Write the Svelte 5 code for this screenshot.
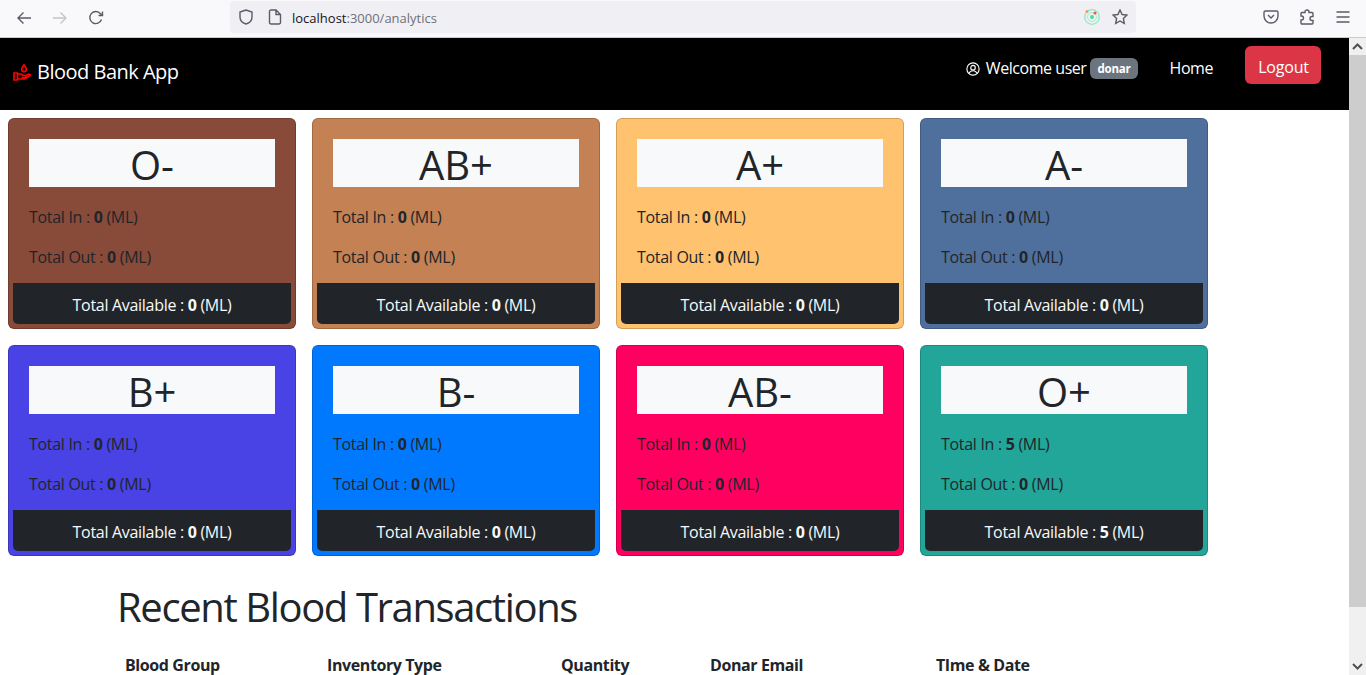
<script>
  const groups = [
    { name: 'O-', color: '#884a39', totalIn: 0, totalOut: 0 },
    { name: 'AB+', color: '#c38154', totalIn: 0, totalOut: 0 },
    { name: 'A+', color: '#ffc26f', totalIn: 0, totalOut: 0 },
    { name: 'A-', color: '#4f709c', totalIn: 0, totalOut: 0 },
    { name: 'B+', color: '#4942e4', totalIn: 0, totalOut: 0 },
    { name: 'B-', color: '#0079ff', totalIn: 0, totalOut: 0 },
    { name: 'AB-', color: '#ff0060', totalIn: 0, totalOut: 0 },
    { name: 'O+', color: '#22a699', totalIn: 5, totalOut: 0 }
  ];
  const columns = ['Blood Group', 'Inventory Type', 'Quantity', 'Donar Email', 'TIme & Date'];
</script>

<div class="window">
  <div class="toolbar">
    <div class="nav-buttons">
      <svg width="16" height="16" viewBox="0 0 16 16" class="ico"><path d="M15 8H2M7.5 2.5 2 8l5.5 5.5" /></svg>
      <svg width="16" height="16" viewBox="0 0 16 16" class="ico faded"><path d="M1 8h13M8.500 2.500 14 8l-5.500 5.500" /></svg>
      <svg width="16" height="16" viewBox="0 0 16 16" class="ico"><path d="M13.500 9.500A6 6 0 1 1 12.500 3.800L14.500 5.500M14.500 1.500v4h-4" /></svg>
    </div>
    <div class="urlbar">
      <svg width="16" height="16" viewBox="0 0 16 16" class="ico shield"><path d="M8 1 2 3v5c0 3.500 2.500 6 6 7 3.500-1 6-3.500 6-7V3z" /></svg>
      <svg width="14" height="16" viewBox="0 0 14 16" class="ico doc"><path d="M1.500 2.500A1.500 1.500 0 0 1 3 1h5l4.500 4.500v8A1.500 1.500 0 0 1 11 15H3a1.500 1.500 0 0 1-1.500-1.500zM8 1v4.500h4.500" /></svg>
      <span class="url">localhost<span class="url-rest">:3000/analytics</span></span>
      <svg width="18" height="18" viewBox="0 0 18 18" class="ext">
        <circle cx="9" cy="9" r="7.300" fill="none" stroke="#8fe8c0" stroke-width="1.300" />
        <circle cx="9" cy="9" r="4.500" fill="none" stroke="#a4eccb" stroke-width="1" />
        <circle cx="9" cy="9" r="2" fill="#4fdc98" />
        <circle cx="4" cy="3.500" r="1.500" fill="#f59a52" />
        <circle cx="12" cy="5" r="1.500" fill="#ef5a3c" />
      </svg>
      <svg width="16" height="16" viewBox="0 0 16 16" class="ico"><path d="m8 1 2.100 4.500 4.900.6-3.600 3.400.9 4.900L8 12l-4.300 2.400.9-4.900L1 6.100l4.900-.6z" /></svg>
    </div>
    <div class="tool-buttons">
      <svg width="16" height="16" viewBox="0 0 16 16" class="ico"><path d="M2.500 2h11A1.500 1.500 0 0 1 15 3.500V7a7 7 0 0 1-14 0V3.500A1.500 1.500 0 0 1 2.500 2zM5 6l3 3 3-3" /></svg>
      <svg width="16" height="16" viewBox="0 0 16 16" class="ico"><path d="M6 3.500V3a2 2 0 0 1 4 0v.500h3a1 1 0 0 1 1 1v3h-1a2 2 0 0 0 0 4h1V14a1 1 0 0 1-1 1H3a1 1 0 0 1-1-1v-3h.5a2 2 0 0 0 0-4H2V4.500a1 1 0 0 1 1-1z" /></svg>
      <svg width="16" height="16" viewBox="0 0 16 16" class="ico"><path d="M1.500 3h13M1.500 8h13M1.500 13h13" /></svg>
    </div>
  </div>

  <div class="viewport">
    <div class="page">
      <nav class="navbar">
        <div class="brand">
          <svg width="18" height="17" viewBox="0 0 18 17" class="brand-icon"><path d="M1 9h3.500v7H1zM4.500 10h3.700l1.800 1.500h2.200c1.200 0 1.200 2 0 2H8.500M4.500 15h7l5.500-3.300c.6-1.200-.7-2-1.700-1.500l-2.300 1.200M11 1c1.200 1.800 2.400 2.900 2.400 4.200a2.400 2.400 0 0 1-4.800 0C8.600 3.900 9.800 2.800 11 1z" /></svg>
          <span>Blood Bank App</span>
        </div>
        <div class="nav-links">
          <div class="welcome">
            <svg width="14" height="14" viewBox="0 0 16 16" class="user-icon"><circle cx="8" cy="8" r="7" /><circle cx="8" cy="6.500" r="2.600" /><path d="M3.500 13c.8-2 2.500-3 4.500-3s3.700 1 4.500 3" /></svg>
            <span class="welcome-text">Welcome user</span>
            <span class="badge">donar</span>
          </div>
          <a class="home" href="#home">Home</a>
          <button class="logout">Logout</button>
        </div>
      </nav>

      <div class="cards">
        {#each groups as g}
          <div class="card" style="background-color: {g.color}">
            <div class="card-body">
              <h1 class="card-title">{g.name}</h1>
              <p>Total In : <b>{g.totalIn}</b> (ML)</p>
              <p>Total Out : <b>{g.totalOut}</b> (ML)</p>
            </div>
            <div class="card-footer">Total Available : <b>{g.totalIn - g.totalOut}</b> (ML)</div>
          </div>
        {/each}
      </div>

      <div class="recent">
        <h1>Recent Blood Transactions</h1>
        <table>
          <thead>
            <tr>
              {#each columns as c}
                <th>{c}</th>
              {/each}
            </tr>
          </thead>
        </table>
      </div>
    </div>

    <div class="scrollbar">
      <div class="arrow">
        <svg width="11" height="7" viewBox="0 0 11 7"><path d="M1 6l4.500-4.500L10 6" /></svg>
      </div>
      <div class="thumb"></div>
      <div class="arrow down">
        <svg width="11" height="7" viewBox="0 0 11 7"><path d="M1 1l4.500 4.500L10 1" /></svg>
      </div>
    </div>
  </div>
</div>

<style>
  :global(body) {
    margin: 0;
    overflow: hidden;
    font-family: 'Open Sans', 'Noto Sans', sans-serif;
    color: #212529;
    background: #fff;
  }

  .window {
    height: 100vh;
    display: flex;
    flex-direction: column;
    overflow: hidden;
  }

  .toolbar {
    height: 37px;
    flex: none;
    display: flex;
    background-color: #f9f9fb;
    border-bottom: 1px solid #ccc;
  }

  .ico {
    fill: none;
    stroke: #5b5b66;
    stroke-width: 1.4;
    flex: none;
  }

  .faded {
    stroke: #c4c4c9;
  }

  .nav-buttons {
    width: 230px;
    flex: none;
    display: flex;
    gap: 20px;
    padding: 10px 0 0 16px;
    box-sizing: border-box;
  }

  .urlbar {
    width: 906px;
    height: 32px;
    margin-top: 1px;
    flex: none;
    display: flex;
    align-items: center;
    background-color: #f0f0f4;
    border-radius: 4px;
    box-sizing: border-box;
    padding: 0 8px;
  }

  .shield {
    margin-right: 14px;
  }

  .doc {
    margin-right: 10px;
  }

  .url {
    flex: 1;
    font-size: 13px;
    padding-top: 1px;
    color: #15141a;
  }

  .url-rest {
    color: #6f6f78;
  }

  .ext {
    margin-right: 11px;
  }

  .tool-buttons {
    flex: 1;
    display: flex;
    justify-content: flex-end;
    gap: 20px;
    padding: 9px 15px 0 0;
  }

  .viewport {
    flex: 1;
    display: flex;
    min-height: 0;
  }

  .page {
    flex: 1;
    min-width: 0;
    overflow: hidden;
  }

  .navbar {
    height: 72px;
    background-color: #000;
    color: #fff;
    display: flex;
    justify-content: space-between;
    padding: 0 28px 0 13px;
    box-sizing: border-box;
  }

  .brand {
    display: flex;
    align-items: center;
    gap: 6px;
    height: 66px;
    font-size: 20px;
    letter-spacing: -0.5px;
  }

  .brand-icon {
    fill: none;
    stroke: #f00;
    stroke-width: 1.7;
    margin-top: 3px;
  }

  .nav-links {
    display: flex;
    align-items: flex-start;
    font-size: 16px;
    letter-spacing: -0.45px;
  }

  .welcome {
    display: flex;
    align-items: center;
    gap: 6px;
    margin-top: 19px;
  }

  .welcome-text {
    margin-right: -2px;
  }

  .user-icon {
    fill: none;
    stroke: #fff;
    stroke-width: 1.3;
    margin: 2px 0 0 1px;
  }

  .badge {
    background-color: #6c757d;
    border-radius: 6px;
    padding: 4px 7px;
    font-size: 11.500px;
    font-weight: 700;
    line-height: 13px;
    letter-spacing: -0.2px;
  }

  .home {
    color: #fff;
    text-decoration: none;
    margin: 19px 32px 0;
  }

  .logout {
    margin-top: 8px;
    width: 76px;
    height: 38px;
    padding: 3px 0 0 1px;
    background-color: #dc3545;
    color: #fff;
    border: none;
    border-radius: 6px;
    font: inherit;
    letter-spacing: -0.2px;
  }

  .cards {
    display: flex;
    flex-wrap: wrap;
  }

  .card {
    width: 288px;
    height: 211px;
    margin: 8px;
    box-sizing: border-box;
    padding: 4px;
    border: 1px solid rgba(0, 0, 0, 0.175);
    border-radius: 6px;
    display: flex;
    flex-direction: column;
  }

  .card-body {
    flex: 1;
    padding: 16px;
    min-height: 0;
  }

  .card-title {
    height: 48px;
    box-sizing: border-box;
    margin: 0 0 18px;
    padding-top: 4px;
    background-color: #f8f9fa;
    text-align: center;
    font-size: 40px;
    font-weight: 400;
    line-height: 44px;
  }

  .card-body p {
    margin: 0 0 16px;
    font-size: 16px;
    line-height: 24px;
    letter-spacing: -0.3px;
  }

  .card-footer {
    background-color: #212529;
    color: #f8f9fa;
    text-align: center;
    padding: 10px 16px 7px;
    line-height: 24px;
    height: 41px;
    box-sizing: border-box;
    border-radius: 0 0 5px 5px;
    letter-spacing: -0.3px;
  }

  .recent {
    padding: 19px 117px 0;
  }

  .recent h1 {
    margin: 0 0 14px;
    font-size: 40px;
    font-weight: 400;
    line-height: 48px;
    letter-spacing: -1.38px;
  }

  table {
    width: 100%;
    border-collapse: collapse;
    table-layout: fixed;
  }

  th {
    text-align: left;
    padding: 8px;
    line-height: 24px;
    font-size: 16px;
    letter-spacing: -0.4px;
    box-sizing: border-box;
  }

  th:nth-child(1) { width: 202px; }
  th:nth-child(2) { width: 234px; }
  th:nth-child(3) { width: 149px; }
  th:nth-child(4) { width: 226px; }

  .scrollbar {
    width: 17px;
    flex: none;
    background-color: #f0f0f0;
    display: flex;
    flex-direction: column;
  }

  .arrow {
    height: 17px;
    flex: none;
    display: flex;
    align-items: center;
    justify-content: center;
  }

  .arrow.down {
    margin-top: auto;
  }

  .arrow svg {
    fill: none;
    stroke: #505050;
    stroke-width: 2;
  }

  .thumb {
    height: 552px;
    background-color: #cdcdcd;
  }
</style>
